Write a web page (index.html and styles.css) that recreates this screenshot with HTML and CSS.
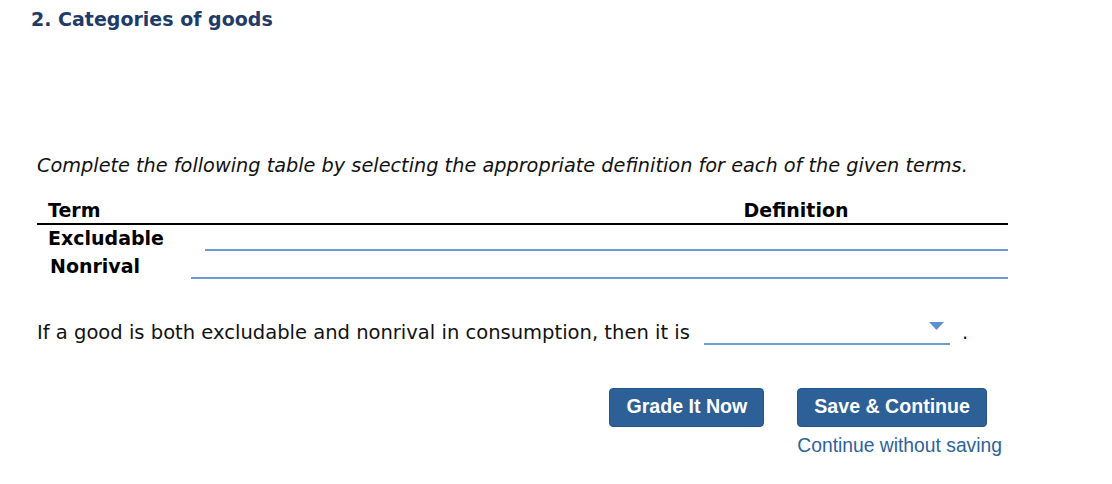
FILE: index.html
```html
<!DOCTYPE html>
<html>
<head>
<meta charset="utf-8">
<link rel="stylesheet" href="styles.css">
</head>
<body>
<div class="page">
  <h2 class="title">2. Categories of goods</h2>
  <div class="content">
    <p class="instr">Complete the following table by selecting the appropriate definition for each of the given terms.</p>
    <div class="table">
      <div class="thead">
        <div class="th-term">Term</div>
        <div class="th-def">Definition</div>
      </div>
      <div class="row">
        <div class="term">Excludable</div>
        <div class="blank blank-a"></div>
      </div>
      <div class="row">
        <div class="term term-b">Nonrival</div>
        <div class="blank blank-b"></div>
      </div>
    </div>
    <p class="sentence">If a good is both excludable and nonrival in consumption, then it is<span class="dropdown"><svg class="caret" width="15" height="8" viewBox="0 0 15 8"><polygon points="0,0 15,0 7.5,8" fill="#5b8fd0"/></svg></span><span class="period">.</span></p>
    <div class="actions">
      <button class="btn">Grade It Now</button>
      <div class="save-col">
        <button class="btn btn-save">Save &amp; Continue</button>
        <a class="link" href="#">Continue without saving</a>
      </div>
    </div>
  </div>
</div>
</body>
</html>
```
FILE: styles.css
```css
html, body {
  margin: 0;
  padding: 0;
  background: #ffffff;
}
.page {
  padding: 7px 0 0 31px;
  width: 977px;
  font-family: "DejaVu Sans", Verdana, sans-serif;
}
.title {
  margin: 0;
  font-size: 19px;
  line-height: 24px;
  font-weight: bold;
  color: #1f3b68;
}
.content {
  padding-left: 6px;
}
.instr {
  margin: 123px 0 0 0;
  font-size: 19.3px;
  line-height: 24px;
  font-style: italic;
  color: #111;
}
.table {
  margin-top: 20px;
}
.thead {
  display: flex;
  border-bottom: 2px solid #000;
  font-weight: bold;
  font-size: 19px;
  line-height: 25px;
  color: #000;
}
.th-term {
  padding-left: 11px;
  width: 536px;
}
.th-def {
  flex: 1;
  text-align: center;
}
.row {
  display: flex;
  align-items: flex-end;
  height: 28px;
  font-size: 19px;
  font-weight: bold;
  color: #000;
}
.term {
  padding: 1px 0 0 11px;
  line-height: 24px;
  align-self: flex-start;
}
.term-b {
  padding-left: 13px;
}
.blank {
  flex: 1;
  border-bottom: 2px solid #6b9bd0;
  margin-bottom: 2px;
}
.blank-a {
  margin-left: 41px;
}
.blank-b {
  margin-left: 51px;
}
.sentence {
  margin: 39px 0 0 0;
  font-size: 19.55px;
  line-height: 24px;
  color: #111;
  display: flex;
  align-items: flex-end;
}
.dropdown {
  display: inline-block;
  position: relative;
  width: 246px;
  height: 23px;
  margin-left: 14px;
  border-bottom: 2px solid #6b9bd0;
}
.caret {
  position: absolute;
  right: 6px;
  top: 2px;
}
.period {
  margin-left: 12px;
}
.actions {
  display: flex;
  justify-content: flex-end;
  gap: 33px;
  margin-top: 43px;
  padding-right: 6px;
}
.btn {
  height: 39px;
  padding: 0 16px 2px;
  border: 1px solid #24558a;
  border-radius: 4px;
  background: #2c6096;
  color: #fff;
  font-family: "Liberation Sans", Arial, sans-serif;
  font-weight: bold;
  font-size: 19.6px;
}
.save-col {
  display: flex;
  flex-direction: column;
  align-items: flex-start;
  gap: 7px;
}
.link {
  font-family: "Liberation Sans", Arial, sans-serif;
  font-size: 19.3px;
  color: #2d629a;
  text-decoration: none;
  line-height: 24px;
}
```
